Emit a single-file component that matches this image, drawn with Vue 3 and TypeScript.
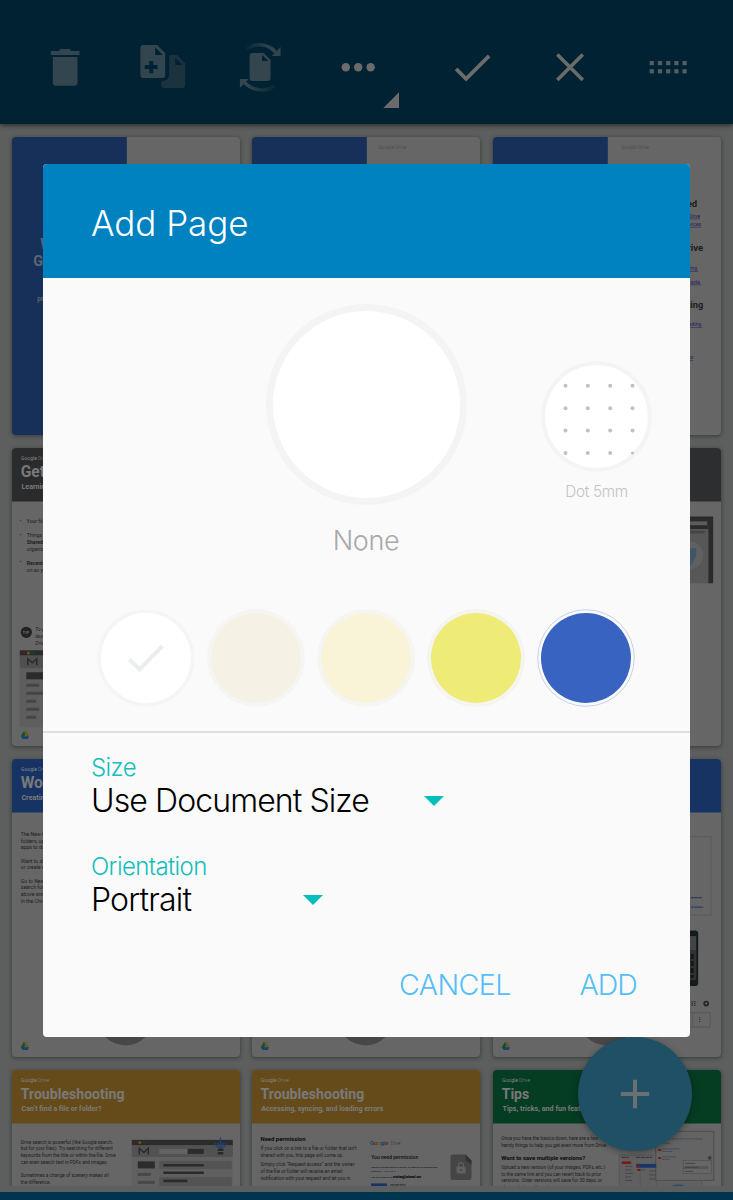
<script setup lang="ts">
interface Line {
  t: string
  x: number
  y: number
  s: number
  w?: number
  b?: number
  f?: string
  i?: boolean
  u?: boolean
}
interface Card {
  id: string
  x: number
  y: number
  head?: string
  lines: Line[]
}

const light = '#7b7b7b'
const dark = '#1d1d1d'
const link = '#1d1f5c'
const colX = [12.2, 252.5, 492.8]
const rowY = [136.5, 447.7, 758.9, 1070.1]

function heading(x: number, y: number, title: string, sub: string, tw?: number, sw?: number): Line[] {
  return [
    { t: 'Google', x, y: y + 12, s: 5.2, w: 16, b: 400, f: '#858585' },
    { t: 'Drive', x: x + 17, y: y + 12, s: 5.2, w: 11, b: 300, f: '#858585' },
    { t: title, x: x - 0.3, y: y + 29.2, s: tw ? 15 : 15.6, w: tw, b: 700, f: '#797979' },
    { t: sub, x: x + 0.5, y: y + 41, s: 7.1, w: sw, b: 700, f: light },
  ]
}

const cards: Card[] = [
  {
    id: 'cover', x: colX[0], y: rowY[0],
    lines: [
      { t: 'What', x: 40.5, y: 249, s: 14, b: 700, f: '#5e6570' },
      { t: 'Google', x: 33.5, y: 265.5, s: 14.5, b: 700, f: '#5e6570' },
      { t: 'practical guide', x: 37.5, y: 300.5, s: 6.5, b: 700, f: '#5e6570' },
    ],
  },
  {
    id: 'intro', x: colX[1], y: rowY[0],
    lines: [{ t: 'Google Drive', x: 379, y: 148.7, s: 5, w: 28, f: '#505050' }],
  },
  {
    id: 'contents', x: colX[2], y: rowY[0],
    lines: [
      { t: 'Google Drive', x: 621, y: 148.7, s: 5, w: 28, f: '#505050' },
      { t: 'Get started', x: 649, y: 206.2, s: 9.5, w: 48, b: 700, f: dark },
      { t: 'What is Google Drive', x: 655, y: 217.2, s: 4.8, w: 45, f: link, u: true },
      { t: 'On all your devices', x: 659, y: 225.4, s: 4.8, w: 42, f: link, u: true },
      { t: 'Work in Drive', x: 646, y: 250.5, s: 9.5, w: 57, b: 700, f: dark },
      { t: 'Creating and sharing.', x: 652, y: 269.5, s: 4.8, w: 46, f: link, u: true },
      { t: 'Work side by side.', x: 660, y: 283.2, s: 4.8, w: 41, f: link, u: true },
      { t: 'Troubleshooting', x: 635, y: 307.3, s: 9.5, w: 68, b: 700, f: dark },
      { t: 'Syncing and loading.', x: 657, y: 326, s: 4.8, w: 45, f: link, u: true },
      { t: 'Tips and tricks', x: 661, y: 358.5, s: 4.8, w: 32, f: link, u: true },
    ],
  },
  {
    id: 'start', x: colX[0], y: rowY[1], head: '#292b2d',
    lines: [
      ...heading(21.2, rowY[1], 'Getting started', 'Learning the basics'),
      { t: '•', x: 20, y: 522.5, s: 4.5, f: dark },
      { t: 'Your files are here', x: 27, y: 522.5, s: 5.1, f: dark },
      { t: '•', x: 20, y: 536.5, s: 4.5, f: dark },
      { t: 'Things people', x: 27, y: 537, s: 5.1, f: dark },
      { t: 'Shared with me', x: 27, y: 543.5, s: 5.1, b: 700, f: dark },
      { t: 'organized for', x: 27, y: 550.3, s: 5.1, f: dark },
      { t: '•', x: 20, y: 564.2, s: 4.5, f: dark },
      { t: 'Recent files', x: 27, y: 564.7, s: 5.1, b: 700, f: dark },
      { t: 'on so you can', x: 27, y: 572, s: 5.1, f: dark },
      { t: 'To get to', x: 35.5, y: 630.5, s: 5, i: true, f: dark },
      { t: 'launch the', x: 35.5, y: 637.5, s: 5, i: true, f: dark },
      { t: 'Drive icon', x: 35.5, y: 644.5, s: 5, i: true, f: dark },
    ],
  },
  { id: 'start2', x: colX[1], y: rowY[1], head: '#292b2d', lines: [] },
  { id: 'devices', x: colX[2], y: rowY[1], head: '#2d2e2f', lines: [] },
  {
    id: 'work', x: colX[0], y: rowY[2], head: '#173364',
    lines: [
      ...heading(21.2, rowY[2], 'Working', 'Creating and sharing'),
      { t: 'The New button', x: 21, y: 836, s: 5.1, f: dark },
      { t: 'folders, upload', x: 21, y: 842.5, s: 5.1, f: dark },
      { t: 'apps to do more', x: 21, y: 849.3, s: 5.1, f: dark },
      { t: 'Want to share', x: 21, y: 862.7, s: 5.1, f: dark },
      { t: 'or create new', x: 21, y: 869.4, s: 5.1, f: dark },
      { t: 'Go to New then', x: 21, y: 882.6, s: 5.1, f: dark },
      { t: 'search for apps', x: 21, y: 889.2, s: 5.1, f: dark },
      { t: 'above and more', x: 21, y: 896, s: 5.1, f: dark },
      { t: 'in the Chrome', x: 21, y: 902.7, s: 5.1, f: dark },
    ],
  },
  { id: 'work2', x: colX[1], y: rowY[2], head: '#173364', lines: [] },
  { id: 'work3', x: colX[2], y: rowY[2], head: '#173364', lines: [] },
  {
    id: 'find', x: colX[0], y: rowY[3], head: '#664b1a',
    lines: [
      ...heading(21.2, rowY[3], 'Troubleshooting', 'Can’t find a file or folder?', 103.8, 80),
      { t: 'Drive search is powerful (like Google search,', x: 21, y: 1143.8, s: 5.1, w: 92, f: dark },
      { t: 'but for your files). Try searching for different', x: 21, y: 1150.5, s: 5.1, w: 92, f: dark },
      { t: 'keywords from the title or within the file. Drive', x: 21, y: 1157.3, s: 5.1, w: 95, f: dark },
      { t: 'can even search text in PDFs and images.', x: 21, y: 1164, s: 5.1, w: 87, f: dark },
      { t: 'Sometimes a change of scenery makes all', x: 21, y: 1177, s: 5.1, w: 88, f: dark },
      { t: 'the difference.', x: 21, y: 1183.8, s: 5.1, w: 30, f: dark },
    ],
  },
  {
    id: 'access', x: colX[1], y: rowY[3], head: '#664b1a',
    lines: [
      ...heading(261.3, rowY[3], 'Troubleshooting', 'Accessing, syncing, and loading errors', 103.8, 122),
      { t: 'Need permission', x: 261, y: 1141, s: 5.8, w: 45, b: 700, f: '#0c0c0c' },
      { t: 'If you click on a link to a file or folder that isn’t', x: 261, y: 1150, s: 5.1, w: 96, f: dark },
      { t: 'shared with you, this page will come up.', x: 261, y: 1156.7, s: 5.1, w: 83, f: dark },
      { t: 'Simply click “Request access” and the owner', x: 261, y: 1166.2, s: 5.1, w: 94, f: dark },
      { t: 'of the file or folder will receive an email', x: 261, y: 1173, s: 5.1, w: 82, f: dark },
      { t: 'notification with your request and let you in.', x: 261, y: 1179.8, s: 5.1, w: 91, f: dark },
      { t: 'You need permission', x: 371.7, y: 1159.3, s: 5, w: 47, b: 500, f: '#101010' },
      { t: 'Want in? Ask the owner for access, or switch to an account with', x: 371.7, y: 1168, s: 2.4, w: 66, b: 500, f: '#101010' },
      { t: 'permission.', x: 371.7, y: 1172, s: 2.4, w: 11, f: '#101010' },
      { t: 'Learn more', x: 384, y: 1172, s: 2.4, w: 12, f: '#18285c' },
      { t: 'You are signed in as', x: 371.7, y: 1178.4, s: 2.5, w: 21, b: 500, f: '#101010' },
      { t: 'ericchang@solarmail.com', x: 393.5, y: 1178.4, s: 2.7, w: 28, b: 900, f: '#000' },
    ],
  },
  {
    id: 'tips', x: colX[2], y: rowY[3], head: '#053d23',
    lines: [
      ...heading(501.8, rowY[3], 'Tips', 'Tips, tricks, and fun features', 27.5, 92),
      { t: 'Once you have the basics down, here are a few', x: 501, y: 1140.4, s: 5.1, w: 97, f: dark },
      { t: 'handy things to help you get even more from Drive:', x: 501, y: 1147.2, s: 5.1, w: 106, f: dark },
      { t: 'Want to save multiple versions?', x: 501, y: 1160, s: 5.8, w: 84, b: 700, f: '#0c0c0c' },
      { t: 'Upload a new version (of your images, PDFs, etc.)', x: 501, y: 1169, s: 5.1, w: 104, f: dark },
      { t: 'to the same link and you can revert back to prior', x: 501, y: 1175.7, s: 5.1, w: 100, f: dark },
      { t: 'versions. Older versions will save for 30 days, or', x: 501, y: 1182.5, s: 5.1, w: 101, f: dark },
      { t: 'choose to keep them longer.', x: 501, y: 1189, s: 5.1, w: 60, f: dark },
    ],
  },
]

const swatches = [
  { fill: '#ffffff', edge: '#f5f5f5', on: true },
  { fill: '#f5f2e5', edge: '#f5f4f0', on: false },
  { fill: '#f9f3d7', edge: '#f6f4ea', on: false },
  { fill: '#efeb77', edge: '#f3f2da', on: false },
  { fill: '#3963c1', edge: '#b9c7e8', on: false },
]
const dotX = [566, 588.3, 610.7, 633]
const dotY = [385.7, 408.2, 430.6, 453]
const tools = ['trash', 'add', 'rotate', 'more', 'check', 'close', 'grid']
const toolX = (i: number) => 16.2 + 97.6 * i + (i > 3 ? 16.8 : 0)
</script>

<template>
  <div class="screen">
    <header class="toolbar">
      <svg v-for="(n, i) in tools" :key="n" :class="['tool', n]" :viewBox="`${toolX(i)} 0 97.6 124`">
        <g v-if="n === 'trash'" fill="#33464f">
          <path d="M51 51h8l1.5-2h9.500l1.500 2h8.200v4H51z" />
          <path d="M53 57h24.700v25.500q0 3.300-3.300 3.300H56.300q-3.300 0-3.300-3.300z" />
        </g>
        <g v-else-if="n === 'add'">
          <path fill="#33464f" fill-rule="evenodd" d="M143 45h14l8 8v22q0 3-3 3h-19q-2.800 0-2.800-3V48q0-3 2.800-3zM155 47.300v7.700h7.500zM149 61v4h-4.500v4h4.500v4.300h4V69h4.300v-4H153v-4z" />
          <path fill="#1a333f" fill-rule="evenodd" d="M169 55h8l8 8.500V85q0 3-3 3h-18q-3 0-3-3v-3.800q8-.2 8-7.200zM175 57.500v7.500h7.500z" />
        </g>
        <g v-else-if="n === 'rotate'">
          <defs>
            <linearGradient id="fadeTop" gradientUnits="userSpaceOnUse" x1="246" y1="0" x2="272" y2="0"><stop offset="0" stop-color="#33464f" stop-opacity="0.1" /><stop offset="1" stop-color="#33464f" /></linearGradient>
            <linearGradient id="fadeLow" gradientUnits="userSpaceOnUse" x1="276" y1="0" x2="247" y2="0"><stop offset="0" stop-color="#33464f" stop-opacity="0.1" /><stop offset="1" stop-color="#33464f" /></linearGradient>
          </defs>
          <path fill="#33464f" fill-rule="evenodd" d="M253 53h11l7 7v18q0 3-3 3h-15q-3 0-3-3V56q0-3 3-3zM262.500 54.800v6.200h6.200z" />
          <path fill="none" stroke="url(#fadeTop)" stroke-width="3.400" d="M246.500 49.500C254 43 267 42.500 276 52" />
          <path fill="none" stroke="url(#fadeLow)" stroke-width="3.400" d="M275 86C267 91.500 254 92 245 82.500" />
          <path fill="#33464f" d="M281 47v9h-8.800zM240.300 79h9l-9 8.800z" />
        </g>
        <g v-else-if="n === 'more'" fill="#6b6b6b">
          <circle cx="345.800" cy="67.300" r="4.200" /><circle cx="358.200" cy="67.300" r="4.200" /><circle cx="370.600" cy="67.300" r="4.200" />
          <path d="M399 92.300V108h-15.700z" />
        </g>
        <path v-else-if="n === 'check'" fill="none" stroke="#6b6b6b" stroke-width="3.800" d="M456.500 68.800l10 10L489.500 55.800" />
        <path v-else-if="n === 'close'" fill="none" stroke="#6b6b6b" stroke-width="3.600" d="M557.300 54.500l25.500 25.500M582.800 54.500l-25.500 25.500" />
        <g v-else fill="#545e62">
          <template v-for="k in 5" :key="k">
            <rect :x="649.300 + (k - 1) * 8.200" y="61" width="4.200" height="4.200" />
            <rect :x="649.300 + (k - 1) * 8.200" y="69.200" width="4.200" height="4.200" />
          </template>
        </g>
      </svg>
    </header>

    <main class="pages">
      <div v-for="c in cards" :key="c.id" class="card">
        <svg class="art" :viewBox="`${c.x} ${c.y} 228 298.3`">
          <rect v-if="c.head" :x="c.x" :y="c.y" width="228" height="53.500" :fill="c.head" />
          <rect v-if="c.y < 140" :x="c.x" :y="c.y" :width="114.800" height="298.300" fill="#173059" />

          <g v-if="c.id === 'start'">
            <circle cx="26.500" cy="632" r="5.600" fill="#222" />
            <text x="22.800" y="633.800" font-size="4.200" font-weight="700" fill="#6a6a6a">TIP</text>
            <rect x="20" y="650" width="100" height="77" fill="#5e5e5e" />
            <rect x="20" y="650" width="100" height="5.300" fill="#2b2b2b" />
            <rect x="20" y="655.300" width="100" height="12.500" fill="#505050" />
            <circle cx="24" cy="652.700" r="1.600" fill="#5a1717" /><circle cx="28.600" cy="652.700" r="1.600" fill="#66561a" /><circle cx="33" cy="652.700" r="1.600" fill="#173f22" />
            <path d="M28 665v-6.500l4.500 4 4.500-4v6.500" fill="none" stroke="#292929" stroke-width="1.500" />
            <rect x="26.500" y="672" width="20" height="7" fill="#2b2b2b" />
            <rect v-for="(w, k) in [13, 18, 10, 13, 10]" :key="k" x="26.500" :y="683.500 + k * 8" :width="w" height="3" fill="#454545" />
          </g>
          <g v-if="c.id === 'start' || c.y === rowY[2]" :transform="`translate(${c.x + 8.800} ${c.y + 283.500})`">
            <path d="M2.700 0h2.700L2.700 7H1.500L0 4.800z" fill="#0b5137" /><path d="M2.700 0h2.700l2.900 4.800H5.500z" fill="#6b5917" /><path d="M2.800 4.800h5.500L6.800 7.500H1.500z" fill="#173f7a" />
          </g>
          <g v-if="c.id === 'devices'">
            <path d="M600 516.300h113V583h-5v-57.700H600v-3.800h108v-.4H600z" fill="#2b2b2b" />
            <rect x="600" y="521.300" width="107" height="3.700" fill="#5c5c5c" />
            <rect x="600" y="525" width="108" height="4" fill="#2b2b2b" />
            <rect x="600" y="529" width="108" height="54" fill="#575757" />
            <rect x="640" y="530.500" width="64.500" height="2.500" fill="#444" />
            <circle cx="689" cy="555" r="14" fill="#606060" />
            <path d="M684 548h12v8l-5 9h-7z" fill="#3e5667" />
          </g>
          <g v-if="c.y === rowY[2]">
            <circle :cx="c.x + 113.500" cy="1017.500" r="27.800" fill="#474747" />
          </g>
          <g v-if="c.id === 'work3'">
            <rect x="620" y="836.500" width="91" height="78.500" fill="none" stroke="#5b5b5b" />
            <path d="M691 897.500h11M691 907h12" stroke="#243b5b" stroke-width="1.200" stroke-dasharray="3 .5" />
            <rect x="655" y="930.500" width="43" height="55.500" rx="3" fill="#151a1b" />
            <rect x="658" y="936" width="38" height="14" fill="#424547" /><rect x="658" y="950" width="38" height="30" fill="#303234" />
            <path d="M692 954v24" stroke="#171717" stroke-width="3" stroke-dasharray="5 2" />
            <path d="M692 1001v5M694.500 1001v5" stroke="#303030" stroke-width="1.400" stroke-dasharray="1.300 .5" />
            <circle cx="706" cy="1003.500" r="2" fill="none" stroke="#262626" stroke-width="1.700" />
            <path d="M620 1012.500h90v14.500h-90zM692.500 1013v14" fill="none" stroke="#585858" />
            <path d="M699.500 1017v5" stroke="#303030" stroke-dasharray="1 1" />
          </g>
          <g v-if="c.id === 'find'">
            <rect x="132" y="1140" width="101" height="50" fill="#606060" />
            <rect x="132" y="1140" width="101" height="5.500" fill="#2c2c2c" />
            <rect x="132" y="1145.500" width="101" height="11.500" fill="#525252" />
            <circle cx="135.200" cy="1142.700" r="1.500" fill="#5a1717" /><circle cx="140" cy="1142.700" r="1.500" fill="#66561a" /><circle cx="144.500" cy="1142.700" r="1.500" fill="#173f22" />
            <path d="M139.500 1154.500v-6l4.500 4 4.500-4v6" fill="none" stroke="#292929" stroke-width="1.400" />
            <rect x="159.500" y="1149" width="28" height="5" fill="#646464" /><rect x="188" y="1149" width="16" height="5" fill="#2c2c2c" />
            <path d="M218 1148.500h5.500v2.500H218zM218 1152h5.500v2.500H218z" fill="#292929" />
            <path d="M220.700 1137.500v8.500M217.500 1143l3.200 3.300 3.200-3.300M215.500 1143q0 4.500 5.200 4.500t5.200-4.500" fill="none" stroke="#20417b" stroke-width="1.300" />
            <rect x="138" y="1161.500" width="17" height="7" fill="#2c2c2c" /><rect x="138" y="1173" width="13" height="3" fill="#484848" /><rect x="138" y="1181" width="17" height="3" fill="#484848" />
            <rect x="159.500" y="1161" width="72.500" height="8.300" fill="#545454" /><rect x="159.500" y="1177" width="72.500" height="10" fill="#545454" />
            <path d="M163.500 1165.300H204M163.500 1172.800H204M163.500 1181H187.500" stroke="#2b2b2b" stroke-width="2.600" />
          </g>
          <g v-if="c.id === 'access'">
            <text x="370.500" y="1145.500" font-size="6.200" font-weight="500" textLength="18.500"><tspan fill="#1c3668">G</tspan><tspan fill="#6a201b">o</tspan><tspan fill="#6b5010">o</tspan><tspan fill="#1c3668">g</tspan><tspan fill="#12502a">l</tspan><tspan fill="#6a201b">e</tspan></text>
            <text x="391" y="1145" font-size="4.600" font-weight="300" fill="#333" textLength="10">Drive</text>
            <path d="M452.500 1154.500H466l6 6v17.500q0 2-2 2h-17.500q-1.500 0-1.500-2V1156q0-1.500 1.500-1.500z" fill="#454545" /><path d="M466 1154.500l6 6v4l-6-4z" fill="#333" />
            <rect x="457" y="1166.500" width="9" height="7" rx="1" fill="#606060" /><path d="M459 1167v-2q0-2.300 2.500-2.300t2.500 2.300v2" fill="none" stroke="#606060" stroke-width="1.200" /><circle cx="461.500" cy="1170" r="1" fill="#444" />
            <rect x="371.500" y="1183.500" width="16" height="4" fill="#173569" /><path d="M391 1185h15" stroke="#333" stroke-width="1.200" stroke-dasharray="4 .5" />
          </g>
          <g v-if="c.id === 'tips'">
            <path d="M619 1155h37v35h-37zM640 1166h62v24h-62z" fill="#606060" stroke="#505050" stroke-width=".600" />
            <rect x="655.500" y="1131.500" width="58" height="49" fill="#646464" stroke="#505050" stroke-width="1.200" />
            <path d="M621.500 1157.500h7M636 1157.500h16" stroke="#353535" stroke-dasharray="4 .6" /><rect x="621.500" y="1161.500" width="9.500" height="2.500" fill="#7a1815" />
            <rect x="636" y="1164" width="20" height="3.800" fill="#173569" />
            <path d="M625 1166.500h7M625 1170h6M625 1173.500h8M625 1177h6M625 1180.500h7M640 1170h5M649 1171h7M649 1175h7M649 1179h6" stroke="#454545" stroke-width=".900" />
            <path d="M668 1139h34M662 1143.500h8M662 1149h17M662 1151.500h10M662 1157h14M662 1159.500h8" stroke="#404958" stroke-width=".900" stroke-dasharray="3 .5" />
            <path d="M658 1150h3M658 1158h3M637 1166h3M637 1170h3" stroke="#781c18" stroke-width="2" />
            <rect x="683" y="1160.500" width="28" height="13" fill="#666" stroke="#4d4d4d" stroke-width=".600" /><path d="M683 1167.500h25" stroke="#565656" stroke-width="3" />
            <path d="M685 1163.500h10M685 1167.500h13M685 1171.500h8" stroke="#444" stroke-width="1" />
            <circle cx="709.500" cy="1158" r="1.800" fill="#3b3b3b" /><ellipse cx="678" cy="1186" rx="6" ry="1.500" fill="#2c506c" />
          </g>

          <text
            v-for="(l, k) in c.lines" :key="k" :x="l.x" :y="l.y" :font-size="l.s" :font-weight="l.b || 400" :fill="l.f"
            :textLength="l.w" lengthAdjust="spacingAndGlyphs" :class="{ ital: l.i, under: l.u }"
          >{{ l.t }}</text>
        </svg>
      </div>
    </main>
    <footer class="navbar"></footer>

    <button class="fab" aria-label="New page">
      <svg viewBox="0 0 30 30"><path d="M15 .8v28.400M.8 15h28.400" stroke="#6b7073" stroke-width="4" /></svg>
    </button>

    <section class="dialog">
      <h1 class="title"><span>Add Page</span></h1>
      <div class="templates">
        <div class="choice main">
          <div class="disc"></div>
          <span class="label">None</span>
        </div>
        <div class="choice side">
          <svg class="dots" viewBox="541.5 361 111 111">
            <circle cx="597" cy="416.500" r="53.300" fill="#fff" stroke="#f4f4f4" stroke-width="4" />
            <template v-for="y in dotY" :key="y">
              <circle v-for="x in dotX" :key="x" :cx="x" :cy="y" :r="x > 630 && y > 450 ? 1.600 : 2" fill="#c1c1c1" />
            </template>
          </svg>
          <span class="small">Dot 5mm</span>
        </div>
      </div>
      <div class="swatches">
        <svg v-for="s in swatches" :key="s.fill" viewBox="-49 -49 98 98">
          <circle r="48.300" :fill="s.fill === '#3963c1' ? '#f9f9fa' : '#f5f5f5'" :stroke="s.edge" stroke-width=".800" />
          <circle r="45" :fill="s.fill" />
          <path v-if="s.on" d="M-16.500 1.500l10 10L16.500-12" fill="none" stroke="#e9eeef" stroke-width="4" />
        </svg>
      </div>
      <div class="form">
        <label class="cap size">Size</label>
        <div class="select wide"><span>Use Document Size</span><svg viewBox="0 0 20 10"><path d="M0 0h20L10 10z" fill="#04bebb" /></svg></div>
        <label class="cap orient">Orientation</label>
        <div class="select narrow"><span>Portrait</span><svg viewBox="0 0 20 10"><path d="M0 0h20L10 10z" fill="#04bebb" /></svg></div>
      </div>
      <div class="actions"><button class="cancel">CANCEL</button><button class="add">ADD</button></div>
    </section>
  </div>
</template>

<style>
body { background: #5b5e5c; }
</style>
<style scoped>
.screen { position: relative; width: 733px; height: 1200px; overflow: hidden; background: #5c5f5e; font-family: Inter, "Liberation Sans", sans-serif; display: flex; flex-direction: column; }
.toolbar { flex: none; height: 124px; background: #002233; display: flex; padding-left: 16.2px; box-sizing: border-box; box-shadow: 0 1px 5px #202524; z-index: 1; }
.tool { flex: none; width: 97.6px; height: 124px; }
.tool.check { margin-left: 16.8px; }
.tool.grid { margin-right: -40px; }
.pages { flex: none; height: 1061.700px; box-sizing: border-box; overflow: hidden; display: grid; grid-template-columns: repeat(3, 228px); grid-auto-rows: 298.300px; gap: 12.900px 12.300px; padding: 12.500px 0 0 12.200px; }
.card { background: #666; border-radius: 4px; box-shadow: 0 1px 4px rgba(35, 40, 40, .7); overflow: hidden; }
.art { display: block; width: 228px; height: 298.300px; font-family: Roboto, sans-serif; }
.ital { font-style: italic; }
.under { text-decoration: underline; }
.navbar { margin-top: 6.300px; flex: 1; background: #003550; }
.fab { position: absolute; left: 578px; top: 1037px; width: 114px; height: 114px; padding: 0; border: 0; border-radius: 50%; background: #205066; box-shadow: 0 2px 6px rgba(0, 0, 0, .35); display: flex; align-items: center; justify-content: center; }
.fab svg { width: 30px; height: 30px; }
.dialog { position: absolute; left: 43px; top: 164px; width: 647px; height: 873px; background: #fafafa; border-radius: 4px; overflow: hidden; font-weight: 300; z-index: 2; }
.title { margin: 0; height: 114.300px; box-sizing: border-box; padding: 38px 0 0 48px; background: #0082c0; color: #fff; font-size: 35px; line-height: 42px; font-weight: 300; letter-spacing: -.05px; }
.templates { height: 330.500px; display: grid; grid-template-columns: 221.500px 203px 73.500px 111px; }
.choice { display: flex; flex-direction: column; align-items: center; }
.main { grid-column: 2; padding-top: 26px; }
.side { grid-column: 4; padding-top: 82.700px; }
.disc { flex: none; width: 187px; height: 187px; border: 7.500px solid #f4f4f4; border-radius: 50%; background: #fff; }
.label { margin-top: 18.700px; font-size: 27px; line-height: 34px; color: #a9a9a9; letter-spacing: -.4px; }
.dots { flex: none; width: 111px; height: 111px; }
.small { margin-top: 10px; font-size: 15.300px; line-height: 20px; color: #c3c3c3; letter-spacing: -.3px; white-space: nowrap; }
.swatches { display: flex; gap: 12px; height: 124px; padding-left: 54px; box-sizing: border-box; border-bottom: 2px solid #dfdfdf; }
.swatches svg { width: 98px; height: 98px; flex: none; }
.form { height: 206px; padding: 19.500px 0 0 48px; box-sizing: border-box; }
.cap { display: block; font-size: 24px; line-height: 32px; color: #13bfbc; letter-spacing: -.6px; }
.select { display: flex; align-items: center; justify-content: space-between; height: 34px; font-size: 32px; line-height: 34px; color: #000; letter-spacing: -.9px; white-space: nowrap; }
.select svg { width: 20px; height: 10px; margin-top: -1px; }
.wide { width: 353px; margin-bottom: 33px; }
.narrow { width: 232px; letter-spacing: -.8px; }
.actions { display: flex; padding: 28.500px 0 0 356px; }
button { font-family: inherit; }
.actions button { border: 0; padding: 0; background: none; color: #55bff5; font-size: 28.500px; line-height: 36px; font-weight: 300; letter-spacing: -1px; text-align: left; }
.actions .cancel { width: 180.500px; letter-spacing: -.5px; }
</style>
